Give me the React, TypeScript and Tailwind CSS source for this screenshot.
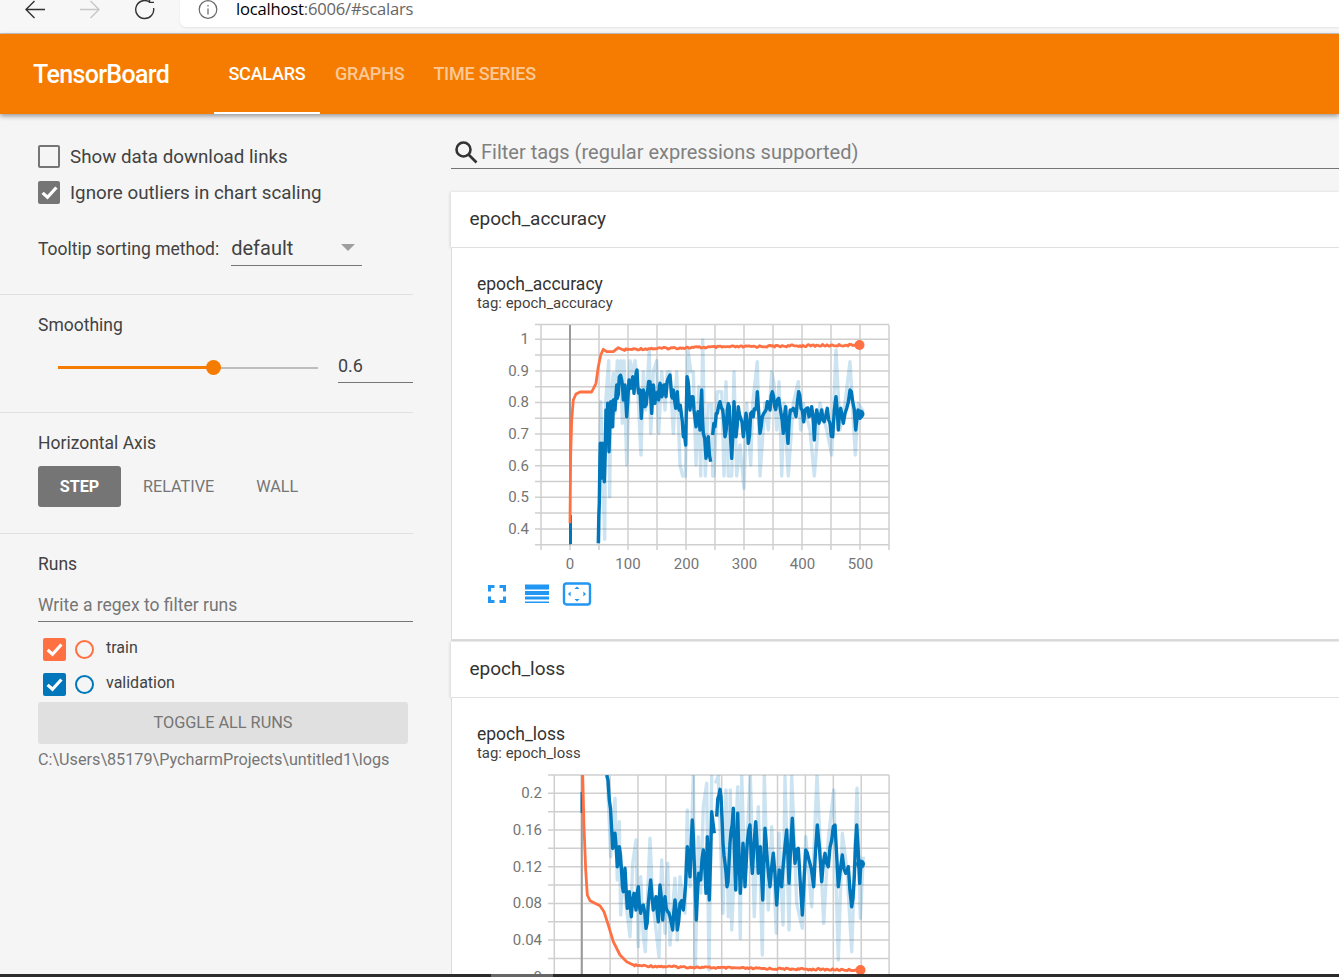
import React from 'react';

type Pts = number[];

// Traced from the chart, in 3x crop coordinates: [x, y, x, y, ...]
const ACC_BLUE_A: Pts = [115,640,118,520,121,340,123,445,127,340,133,455,138,240,141,320,143,220,147,365,152,215,158,290,160,210,165,240,170,165,172,205,178,140,185,150,190,210,195,165,200,260,207,150,212,175,218,140,222,190,226,150,231,120,236,190,240,180,244,265,250,180,255,230,262,190,270,155,275,250,280,165,285,220,290,190,296,210,300,160,305,200,312,165,318,200,325,145,330,135,335,200,340,180,347,235,352,185,358,240,364,250,370,320,377,345,381,140,386,170,390,240,396,200,402,240,408,290,414,245,420,300,425,180,430,310,438,385,445,320,452,395];
const ACC_BLUE_B: Pts = [8,315,15,290,22,250,30,215,38,240,45,320,52,240,58,230,65,385,72,215,78,320,85,230,92,265,100,320,108,250,115,340,122,250,130,260,135,240,142,185,150,310,157,260,165,245,172,215,180,240,187,185,194,230,200,220,206,205,213,250,220,310,227,230,234,340,241,240,250,235,258,260,266,185,273,235,281,275,290,235,297,260,305,230,313,330,320,240,327,280,335,240,343,275,352,235,360,280,368,320,378,200,385,300,392,235,400,280,410,235,420,180,428,215,437,300,444,240,450,265,458,252];
const ACC_RAW_A: Pts = [117,640,122,215,128,420,134,628,137,215,146,92,149,500,152,215,160,130,165,250,172,92,176,180,182,92,187,280,192,92,200,405,210,92,216,130,225,92,232,150,243,375,250,125,257,240,268,60,272,310,280,125,290,92,296,310,305,125,315,240,322,125,330,125,340,310,350,125,360,405,368,438,376,438,384,60,392,125,400,125,408,405,416,170,422,438,428,30,436,438,445,220];
const ACC_RAW_B: Pts = [5,220,8,438,12,438,22,185,35,185,42,438,48,155,55,438,65,438,72,125,80,438,90,345,102,475,110,220,122,405,128,220,142,95,150,438,165,220,175,300,185,125,192,160,200,300,207,155,215,438,222,220,235,438,250,220,265,155,272,300,280,220,300,300,313,438,330,220,350,300,365,375,378,60,390,300,405,220,420,95,436,375,445,220,460,245];
const ACC_ORANGE: Pts = [300,610,302,400,305,300,310,240,318,222,330,216,365,216,378,190,385,140,392,105,400,88,410,95,430,95,445,83,460,90];

const LOSS_BLUE_A: Pts = [110,15,118,90,125,180,128,235,135,190,142,290,148,230,155,310,160,365,165,295,172,415,178,365,184,440,192,370,198,420,205,350,212,430,220,405,228,475,235,400,242,330,250,420,258,380,265,455,270,345,278,450,285,380,293,425,300,440,308,480,315,390,322,480,330,400,340,420,347,340,352,230,360,320,367,150,372,260,379,450,386,310,392,330,400,240,408,370,412,200,418,390,425,125,433,190];
const LOSS_BLUE_B: Pts = [5,140,12,75,18,80,24,220,30,280,36,350,42,280,48,185,55,115,62,360,68,130,76,370,84,220,90,350,96,230,105,165,112,310,122,155,130,310,136,230,143,390,150,175,157,270,165,350,175,250,185,405,193,300,200,350,207,260,215,180,222,340,232,145,240,280,250,235,262,435,272,240,282,270,296,350,307,165,320,335,330,250,340,290,350,210,360,165,370,350,382,255,392,310,400,290,410,410,418,320,425,165,434,340,440,280,445,283];
const LOSS_RAW_A: Pts = [112,15,122,260,135,85,142,330,148,155,152,435,160,300,168,400,180,500,188,280,198,210,205,530,212,320,220,500,226,545,240,205,248,400,256,460,267,560,275,270,285,490,293,280,300,525,315,325,322,510,330,320,345,430,352,120,360,350,370,15,376,590,385,200,392,370,400,110,410,40,417,600,425,15];
const LOSS_RAW_B: Pts = [1,40,11,15,10,15,24,430,33,60,40,440,46,60,50,480,68,50,76,505,80,15,90,340,106,15,118,440,130,110,142,555,148,15,160,420,170,170,184,490,192,190,204,465,210,20,222,480,230,15,245,400,262,475,272,200,290,410,306,15,326,460,340,210,356,60,370,570,382,190,396,300,410,545,426,55,436,445,445,260];
const LOSS_ORANGE: Pts = [38,15,42,170,47,300,52,375,60,392,75,400,90,407,102,425,115,465,130,515,150,555,170,575,190,585];

const toPage = (pts: Pts, ox: number, oy: number) => {
  const out: string[] = [];
  for (let i = 0; i < pts.length; i += 2) {
    out.push(`${(ox + pts[i] / 3).toFixed(1)},${(oy + pts[i + 1] / 3).toFixed(1)}`);
  }
  return out.join(' ');
};

const jitter = (i: number) => {
  const v = Math.sin(i * 12.9898) * 43758.5453;
  return (v - Math.floor(v) - 0.5) * 2;
};

// adds a noisy midpoint to every segment, the trace only holds the large swings
const roughen = (pts: Pts, amp: number) => {
  const out: Pts = [];
  for (let i = 0; i < pts.length - 2; i += 2) {
    out.push(pts[i], pts[i + 1]);
    out.push((pts[i] + pts[i + 2]) / 2, (pts[i + 1] + pts[i + 3]) / 2 + jitter(i) * amp);
  }
  out.push(pts[pts.length - 2], pts[pts.length - 1]);
  return out;
};

const tail = (x0: number, y0: number, x1: number, y1: number, amp: number) => {
  const out: string[] = [];
  let i = 0;
  for (let x = x0; x < x1; x += 1.5, i++) {
    const t = (x - x0) / (x1 - x0);
    const y = y0 + (y1 - y0) * Math.pow(t, 0.6) + jitter(i) * amp;
    out.push(`${x.toFixed(1)},${y.toFixed(1)}`);
  }
  out.push(`${x1},${y1}`);
  return out.join(' ');
};

const range = (start: number, step: number, n: number) =>
  Array.from({ length: n }, (_, i) => start + step * i);

const GRID = '#cfcfcf';
const TICK = '#757575';
const BLUE = '#0077bb';
const ORANGE = '#ff7043';

const AccuracyChart = () => {
  const vx = range(541, 29, 13);
  const hy = range(339.3, 15.8, 14);
  const yLabels: [string, number][] = [['1', 339], ['0.9', 371], ['0.8', 402], ['0.7', 434], ['0.6', 466], ['0.5', 497], ['0.4', 529]];
  const xLabels: [string, number][] = [['0', 570], ['100', 628], ['200', 686.5], ['300', 744.5], ['400', 802.5], ['500', 860.5]];
  return (
    <svg viewBox="470 320 430 256" className="block h-[256px] w-[430px]">
      <line x1="535" x2="889" y1="324.5" y2="324.5" stroke={GRID} strokeWidth="1.5" />
      {hy.map((y) => (
        <line key={y} x1="535" x2="889" y1={y} y2={y} stroke={GRID} strokeWidth="1.5" />
      ))}
      {vx.map((x) => (
        <line key={x} x1={x} x2={x} y1="325" y2="550" stroke={GRID} strokeWidth="1.5" />
      ))}
      <line x1="570" x2="570" y1="325" y2="545" stroke="#9a9a9a" strokeWidth="2" />
      {yLabels.map(([t, y]) => (
        <text key={t} x="529" y={y + 5} textAnchor="end" fontSize="15" fill={TICK}>{t}</text>
      ))}
      {xLabels.map(([t, x]) => (
        <text key={t} x={x} y="569" textAnchor="middle" fontSize="15" fill={TICK}>{t}</text>
      ))}
      <polyline points={toPage(ACC_RAW_A, 560, 330)} fill="none" stroke={BLUE} strokeOpacity="0.2" strokeWidth="3.4" strokeLinejoin="round" />
      <polyline points={toPage(ACC_RAW_B, 710, 330)} fill="none" stroke={BLUE} strokeOpacity="0.2" strokeWidth="3.4" strokeLinejoin="round" />
      <line x1="570.5" x2="570.5" y1="515" y2="544" stroke={BLUE} strokeWidth="3" />
      <polyline points={toPage(roughen(ACC_BLUE_A, 22), 560, 330)} fill="none" stroke={BLUE} strokeWidth="3.4" strokeLinejoin="round" />
      <polyline points={toPage(roughen(ACC_BLUE_B, 22), 710, 330)} fill="none" stroke={BLUE} strokeWidth="3.4" strokeLinejoin="round" />
      <circle cx="860" cy="414" r="4.5" fill={BLUE} />
      <polyline points={toPage(ACC_ORANGE, 470, 320)} fill="none" stroke={ORANGE} strokeWidth="2.8" strokeLinejoin="round" />
      <polyline points={tail(623, 350, 859, 345, 1)} fill="none" stroke={ORANGE} strokeWidth="2.8" strokeLinejoin="round" />
      <circle cx="859.5" cy="345" r="5" fill={ORANGE} />
    </svg>
  );
};

const LossChart = () => {
  const vx = range(554.3, 27.9, 13);
  const hy = range(793.3, 18.35, 10);
  const yLabels: [string, number][] = [['0.2', 793], ['0.16', 830], ['0.12', 867], ['0.08', 903], ['0.04', 940], ['0', 977]];
  return (
    <svg viewBox="470 770 430 207" className="block h-[207px] w-[430px]">
      <defs>
        <clipPath id="loss-plot">
          <rect x="548" y="775" width="341" height="205" />
        </clipPath>
      </defs>
      <line x1="548" x2="889" y1="775" y2="775" stroke={GRID} strokeWidth="1.5" />
      {hy.map((y) => (
        <line key={y} x1="548" x2="889" y1={y} y2={y} stroke={GRID} strokeWidth="1.5" />
      ))}
      {vx.map((x) => (
        <line key={x} x1={x} x2={x} y1="775" y2="977" stroke={GRID} strokeWidth="1.5" />
      ))}
      <line x1="581.7" x2="581.7" y1="775" y2="977" stroke="#9a9a9a" strokeWidth="2" />
      {yLabels.map(([t, y]) => (
        <text key={t} x="542" y={y + 5} textAnchor="end" fontSize="15" fill={TICK}>{t}</text>
      ))}
      <g clipPath="url(#loss-plot)">
        <polyline points={toPage(LOSS_RAW_A, 570, 770)} fill="none" stroke={BLUE} strokeOpacity="0.2" strokeWidth="3.4" strokeLinejoin="round" />
        <polyline points={toPage(LOSS_RAW_B, 715, 770)} fill="none" stroke={BLUE} strokeOpacity="0.2" strokeWidth="3.4" strokeLinejoin="round" />
        <line x1="581.5" x2="581.5" y1="792" y2="813" stroke={BLUE} strokeWidth="2" />
        <polyline points={toPage(roughen(LOSS_BLUE_A, 22), 570, 770)} fill="none" stroke={BLUE} strokeWidth="3.4" strokeLinejoin="round" />
        <polyline points={toPage(roughen(LOSS_BLUE_B, 22), 715, 770)} fill="none" stroke={BLUE} strokeWidth="3.4" strokeLinejoin="round" />
        <circle cx="860.5" cy="864" r="4.5" fill={BLUE} />
        <polyline points={toPage(LOSS_ORANGE, 570, 770)} fill="none" stroke={ORANGE} strokeWidth="2.8" strokeLinejoin="round" />
        <polyline points={tail(633, 965, 860, 970, 0.9)} fill="none" stroke={ORANGE} strokeWidth="2.8" strokeLinejoin="round" />
        <circle cx="860.5" cy="970" r="5" fill={ORANGE} />
      </g>
    </svg>
  );
};

const CheckMark = ({ size = 19 }: { size?: number }) => (
  <svg width={size} height={size} viewBox="0 0 16 16" fill="none">
    <path d="M2.2 8.3 L6.3 12 L13.8 3.8" stroke="#fff" strokeWidth="2.7" />
  </svg>
);

const ChartIcons = () => (
  <div className="ml-[35px] mt-[6px] flex items-center text-[#2196f3]">
    <svg width="20" height="20" viewBox="0 0 20 20" fill="none" stroke="currentColor" strokeWidth="3">
      <path d="M2.5 7.5V2.5H7.5M12.5 2.5H17.5V7.5M17.5 12.5V17.5H12.5M7.5 17.5H2.5V12.5" />
    </svg>
    <svg width="26" height="20" viewBox="0 0 26 20" className="ml-[17px]" fill="currentColor">
      <rect x="1" y="0.5" width="24" height="5" />
      <rect x="1" y="7" width="24" height="4" />
      <rect x="1" y="12.5" width="24" height="3" />
      <rect x="1" y="17.5" width="24" height="1.5" />
    </svg>
    <svg width="30" height="24" viewBox="0 0 30 24" className="ml-[12px]" fill="none">
      <rect x="2" y="1.5" width="26" height="21" rx="2.5" stroke="currentColor" strokeWidth="2.4" />
      <path d="M15 4.5l-2.6 2.6h5.2zM15 19.5l-2.6-2.6h5.2zM6 12l2.6-2.6v5.2zM24 12l-2.6-2.6v5.2z" fill="currentColor" />
    </svg>
  </div>
);

const RunRow = ({ name, color }: { name: string; color: string }) => (
  <div className="flex h-[35px] items-start pl-[5px]">
    <span style={{ backgroundColor: color }} className="flex h-[23px] w-[23px] items-center justify-center rounded-[2px]">
      <CheckMark />
    </span>
    <span style={{ borderColor: color }} className="ml-[9px] mt-[2px] h-[19px] w-[19px] rounded-full border-2" />
    <span className="ml-[12px] text-[16px] leading-[20px] text-[#424242]">{name}</span>
  </div>
);

export default function App() {
  return (
    <div className="relative h-[977px] w-[1339px] overflow-hidden bg-[#f5f5f5] font-['Roboto',sans-serif]">
      {/* browser chrome */}
      <div className="flex h-[34px] border-b border-[#c9c9c9] bg-[#f7f7f7]">
        <div className="flex h-[20px] w-[180px] items-center pl-[24px]">
          <svg width="22" height="20" viewBox="0 0 22 20" fill="none" stroke="#333" strokeWidth="1.4">
            <path d="M21 9.5H2M10.5 1L2 9.5L10.5 18" />
          </svg>
          <svg width="22" height="20" viewBox="0 0 22 20" className="ml-[33px]" fill="none" stroke="#c8c8c8" strokeWidth="1.4">
            <path d="M1 9.5H20M11.5 1L20 9.5L11.5 18" />
          </svg>
          <svg width="22" height="20" viewBox="0 0 22 20" className="ml-[33px]" fill="none" stroke="#333" strokeWidth="1.4">
            <path d="M15 1.6A9 9 0 1 0 19.6 8M15.5 -2V2.4H20" />
          </svg>
        </div>
        <div className="flex h-[27px] flex-1 items-start rounded-bl-[6px] bg-white pl-[18px] shadow-[0_1px_2px_rgba(0,0,0,0.08)]">
          <svg width="20" height="20" viewBox="0 0 20 20" fill="none" stroke="#666" strokeWidth="1.2">
            <circle cx="10" cy="9.5" r="8.8" />
            <path d="M10 8.5V14.5M10 5V6.5" />
          </svg>
          <span className="ml-[18px] font-['Open_Sans',sans-serif] text-[16.6px] leading-[17px] tracking-[-0.2px] text-[#666]">
            <span className="text-black">localhost</span>:6006/#scalars
          </span>
        </div>
      </div>

      {/* toolbar */}
      <header className="relative z-10 flex h-[80px] items-stretch bg-[#f57c00] pl-[33px] text-white shadow-[0_2px_5px_rgba(0,0,0,0.4)]">
        <div className="flex w-[181px] items-center pt-[2px] text-[25px] font-medium tracking-[-0.65px]">TensorBoard</div>
        <nav className="flex text-[18px] font-medium tracking-[-0.22px]">
          <div className="flex w-[106px] items-center justify-center border-b-[2px] border-white">SCALARS</div>
          <div className="ml-[15px] flex items-center pb-[1px] text-white/60">GRAPHS</div>
          <div className="ml-[29px] flex items-center pb-[1px] text-white/60">TIME SERIES</div>
        </nav>
      </header>

      <div className="flex">
        {/* sidebar */}
        <aside className="w-[413px] shrink-0 text-[#424242]">
          <section className="h-[181px] border-b border-[#e0e0e0] pl-[38px] pt-[31px]">
            <div className="flex h-[23px] items-center">
              <span className="h-[23px] w-[22px] rounded-[2px] border-2 border-[#757575]" />
              <span className="ml-[10px] pt-[2px] text-[18.75px]">Show data download links</span>
            </div>
            <div className="mt-[13px] flex h-[23px] items-center">
              <span className="flex h-[23px] w-[22px] items-center justify-center rounded-[2px] bg-[#757575]">
                <CheckMark />
              </span>
              <span className="ml-[10px] pt-[2px] text-[18.75px]">Ignore outliers in chart scaling</span>
            </div>
            <div className="mt-[26px] flex items-start">
              <span className="pt-[7px] text-[17.5px] leading-[24px]">Tooltip sorting method:</span>
              <div className="ml-[12px] flex h-[36px] w-[131px] items-center justify-between border-b border-[#757575] pr-[7px]">
                <span className="text-[20px]">default</span>
                <span className="h-0 w-0 border-x-[7px] border-t-[7px] border-x-transparent border-t-[#9e9e9e]" />
              </div>
            </div>
          </section>

          <section className="h-[118px] border-b border-[#e0e0e0] pl-[38px] pt-[19px]">
            <div className="text-[17.5px] leading-[22px]">Smoothing</div>
            <div className="mt-[11px] flex items-start">
              <div className="relative ml-[20px] mt-[19.5px] h-[2px] w-[260px] bg-[#bdbdbd]">
                <div className="absolute left-0 top-[-0.5px] h-[3px] w-[155px] bg-[#f57c00]" />
                <div className="absolute left-[148px] top-[-7px] h-[15px] w-[15px] rounded-full bg-[#f57c00]" />
              </div>
              <div className="ml-[20px] h-[36px] w-[75px] border-b border-[#757575] pt-[7px] text-[18px] leading-[24px]">0.6</div>
            </div>
          </section>

          <section className="h-[121px] border-b border-[#e0e0e0] pl-[38px] pt-[19px]">
            <div className="text-[17.5px] leading-[22px]">Horizontal Axis</div>
            <div className="mt-[12px] flex h-[41px] items-center text-[16.2px] text-[#757575]">
              <div className="flex h-[41px] w-[83px] items-center justify-center rounded-[3px] bg-[#757575] pt-[1px] font-bold text-white">STEP</div>
              <span className="ml-[22px] pt-[1px]">RELATIVE</span>
              <span className="ml-[42px] pt-[1px]">WALL</span>
            </div>
          </section>

          <section className="pl-[38px] pt-[19px]">
            <div className="text-[17.5px] leading-[22px]">Runs</div>
            <div className="mt-[18px] h-[29px] border-b border-[#757575] text-[17.5px] leading-[24px] text-[#757575]">Write a regex to filter runs</div>
            <div className="mt-[16px]">
              <RunRow name="train" color="#ff7043" />
              <RunRow name="validation" color="#0077bb" />
            </div>
            <div className="mt-[-6px] flex h-[42px] w-[370px] items-center justify-center rounded-[3px] bg-[#e0e0e0] pt-[1px] text-[16.3px] text-[#757575]">TOGGLE ALL RUNS</div>
            <div className="mt-[6px] text-[16.2px] leading-[20px] text-[#757575]">C:\Users\85179\PycharmProjects\untitled1\logs</div>
          </section>
        </aside>

        {/* main column */}
        <main className="ml-[38px] min-w-0 flex-1">
          <div className="flex h-[55px] items-end border-b border-[#757575] pb-[3px] pl-[3px]">
            <svg width="25" height="25" viewBox="0 0 25 25" fill="none" stroke="#333" strokeWidth="2.6">
              <circle cx="9.5" cy="9.5" r="7" />
              <path d="M14.5 14.5L22.5 22.5" />
            </svg>
            <span className="ml-[2px] text-[20px] leading-[26px] text-[#808080]">Filter tags (regular expressions supported)</span>
          </div>

          <div className="mt-[23px] flex h-[56px] items-center border-b border-[#e0e0e0] bg-white pl-[18.5px] text-[19px] text-[#333] shadow-[-1px_0_3px_rgba(0,0,0,0.12)]">epoch_accuracy</div>
          <div className="h-[393px] border-b-2 border-l border-[#dcdcdc] bg-white">
            <div className="pl-[25px] pt-[25px]">
              <div className="text-[17.5px] leading-[22px] text-[#333]">epoch_accuracy</div>
              <div className="text-[14.9px] leading-[17px] text-[#424242]">tag: epoch_accuracy</div>
            </div>
            <div className="ml-[18px] mt-[8px]">
              <AccuracyChart />
            </div>
            <ChartIcons />
          </div>

          <div className="mt-[1px] flex h-[56px] items-center border-b border-[#e0e0e0] bg-white pl-[18.5px] text-[19px] text-[#333] shadow-[-1px_0_3px_rgba(0,0,0,0.12)]">epoch_loss</div>
          <div className="h-[300px] border-l border-[#dcdcdc] bg-white">
            <div className="pl-[25px] pt-[25px]">
              <div className="text-[17.5px] leading-[22px] text-[#333]">epoch_loss</div>
              <div className="text-[14.9px] leading-[17px] text-[#424242]">tag: epoch_loss</div>
            </div>
            <div className="ml-[18px] mt-[8px]">
              <LossChart />
            </div>
          </div>
        </main>
      </div>

      {/* screenshot edge */}
      <div className="absolute inset-x-0 bottom-0 h-[3px] bg-[#2b2b2b]">
        <div className="ml-[491px] h-full w-[62px] bg-[#666]" />
      </div>
    </div>
  );
}
